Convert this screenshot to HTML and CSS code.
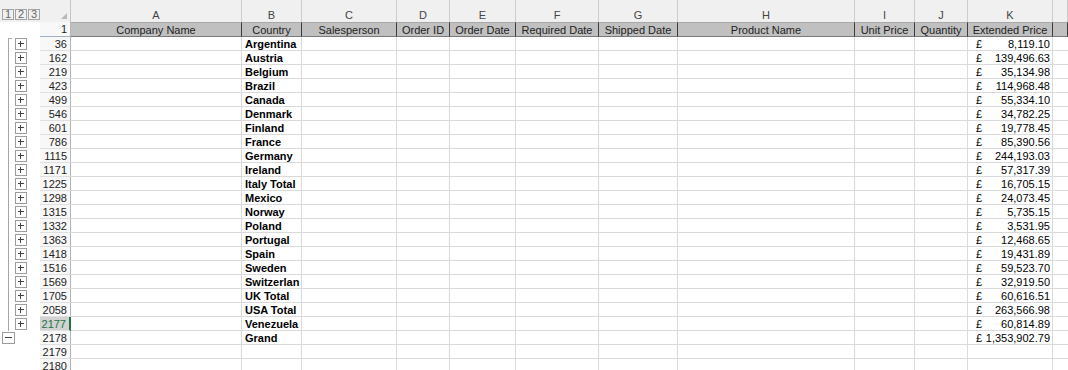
FILE: index.html
```html
<!DOCTYPE html>
<html lang="en">
<head>
    <meta charset="UTF-8">
    <meta name="viewport" content="width=device-width, initial-scale=1.0">
    <title>Sales by Country</title>
    <link rel="stylesheet" href="styles.css">
</head>
<body>
    <div class="sheet" id="sheet"></div>

    <script>
        var letters = ["A", "B", "C", "D", "E", "F", "G", "H", "I", "J", "K", ""];
        var heads = ["Company Name", "Country", "Salesperson", "Order ID", "Order Date", "Required Date",
            "Shipped Date", "Product Name", "Unit Price", "Quantity", "Extended Price", ""];

        var rows = [
            [36, "Argentina", "8,119.10"],
            [162, "Austria", "139,496.63"],
            [219, "Belgium", "35,134.98"],
            [423, "Brazil", "114,968.48"],
            [499, "Canada", "55,334.10"],
            [546, "Denmark", "34,782.25"],
            [601, "Finland", "19,778.45"],
            [786, "France", "85,390.56"],
            [1115, "Germany", "244,193.03"],
            [1171, "Ireland", "57,317.39"],
            [1225, "Italy Total", "16,705.15"],
            [1298, "Mexico", "24,073.45"],
            [1315, "Norway", "5,735.15"],
            [1332, "Poland", "3,531.95"],
            [1363, "Portugal", "12,468.65"],
            [1418, "Spain", "19,431.89"],
            [1516, "Sweden", "59,523.70"],
            [1569, "Switzerlan", "32,919.50"],
            [1705, "UK Total", "60,616.51"],
            [2058, "USA Total", "263,566.98"],
            [2177, "Venezuela", "60,814.89"],
            [2178, "Grand", "1,353,902.79"],
            [2179, "", ""],
            [2180, "", ""]
        ];

        var html = "";

        // column letters
        html += '<div class="levels"><span>1</span><span>2</span><span>3</span></div>';
        html += '<div class="corner"></div>';
        for (var i = 0; i < letters.length; i++) {
            html += '<div class="col">' + letters[i] + '</div>';
        }

        // row 1 headings
        html += '<div class="ol"></div>';
        html += '<div class="rh first">1</div>';
        for (var i = 0; i < heads.length; i++) {
            html += '<div class="hdr">' + heads[i] + '</div>';
        }

        for (var r = 0; r < rows.length; r++) {
            var num = rows[r][0], country = rows[r][1], price = rows[r][2];

            if (num < 2178) {
                html += '<div class="ol"><span class="rail' + (r === 0 ? ' top' : '') + '"></span><span class="btn plus"></span></div>';
            } else if (num === 2178) {
                html += '<div class="ol"><span class="btn minus"></span></div>';
            } else {
                html += '<div class="ol"></div>';
            }

            html += '<div class="rh' + (num === 2177 ? ' sel' : '') + '">' + num + '</div>';

            for (var c = 0; c < letters.length; c++) {
                if (c === 1) {
                    html += '<div class="c bold">' + country + '</div>';
                } else if (c === 10) {
                    if (price) {
                        html += '<div class="c money"><span>£</span><span>' + price + '</span></div>';
                    } else {
                        html += '<div class="c"></div>';
                    }
                } else if (c === 11) {
                    html += '<div class="c last"></div>';
                } else {
                    html += '<div class="c"></div>';
                }
            }
        }

        document.getElementById("sheet").innerHTML = html;
    </script>
</body>
</html>
```

FILE: styles.css
```css
body {
    margin: 0;
    font-family: "Liberation Sans", Arial, sans-serif;
    font-size: 11px;
    color: #000;
    background: #fff;
    overflow: hidden;
}
.sheet {
    display: grid;
    grid-template-columns: 40px 31px 171px 60px 95px 53px 66px 83px 79px 177px 60px 53px 85px 1fr;
    grid-template-rows: 22px 15px;
    grid-auto-rows: 14px;
}
.sheet > div {
    box-sizing: border-box;
    overflow: hidden;
    white-space: nowrap;
    line-height: 14px;
}

/* top header band */
.levels {
    background: #f0f0f0;
    display: flex;
    gap: 1px;
    padding: 9px 0 0 2px;
}
.levels span {
    width: 12px;
    height: 11px;
    box-sizing: border-box;
    border: 1px solid #a3a3a3;
    color: #666;
    font-size: 11px;
    line-height: 9px;
    text-align: center;
}
.corner {
    background: #f0f0f0;
    border-right: 1px solid #c6c6c6;
    position: relative;
}
.corner::after {
    content: "";
    position: absolute;
    right: 3px;
    bottom: 3px;
    border-style: solid;
    border-width: 0 0 6px 6px;
    border-color: transparent transparent #b9b9b9 transparent;
}
.col {
    background: #f0f0f0;
    border-right: 1px solid #cdcdcd;
    text-align: center;
    color: #444;
    padding-top: 8px;
}
.hdr {
    background: #c0c0c0;
    border-top: 1px solid #a8a8a8;
    border-bottom: 1px solid #7a7a7a;
    border-right: 1px solid #3c3c3c;
    text-align: center;
    color: #222;
}

/* row headers */
.rh {
    background: #f8f8f8;
    border-right: 1px solid #b5b5b5;
    border-bottom: 1px solid #e0e0e0;
    text-align: right;
    padding-right: 3px;
    color: #222;
}
.rh.first {
    border-bottom-color: #9fb0c4;
}
.rh.sel {
    background: #d2d2d2;
    color: #217346;
    border-right: 2px solid #217346;
}

/* cells */
.c {
    border-right: 1px solid #dadada;
    border-bottom: 1px solid #dadada;
}
.c.last {
    border-right: none;
}
.c.bold {
    font-weight: bold;
    padding-left: 3px;
}
.c.money {
    display: flex;
    justify-content: space-between;
    gap: 3px;
    padding: 0 2px 0 8px;
}

/* outline bar */
.ol {
    display: flex;
    align-items: flex-start;
}
.rail {
    width: 4px;
    height: 100%;
    margin: 0 3px 0 8px;
    box-sizing: border-box;
    border-left: 1px solid #a6a6a6;
}
.rail.top {
    margin-top: 1px;
    border-top: 1px solid #a6a6a6;
}
.btn {
    width: 12px;
    height: 12px;
    margin-top: 1px;
    box-sizing: border-box;
    border: 1px solid #9c9c9c;
    background: #fff;
    position: relative;
}
.btn.minus {
    width: 13px;
    margin-left: 2px;
}
.btn::before {
    content: "";
    position: absolute;
    left: 2px;
    right: 2px;
    top: 4px;
    height: 1px;
    background: #444;
}
.btn.plus::after {
    content: "";
    position: absolute;
    top: 2px;
    bottom: 2px;
    left: 4px;
    width: 1px;
    background: #444;
}
```
